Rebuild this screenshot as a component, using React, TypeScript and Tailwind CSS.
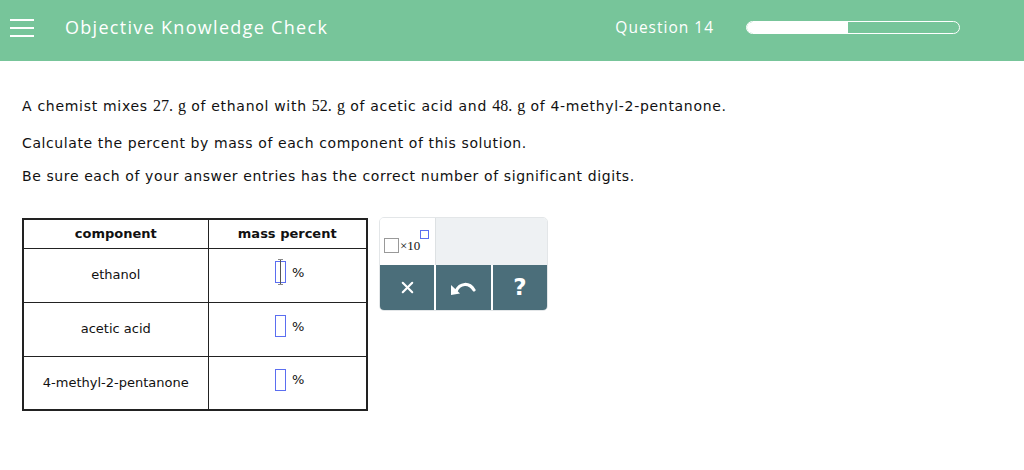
import { X } from 'lucide-react';

const sans = { fontFamily: '"DejaVu Sans", Verdana, sans-serif' };
const serif = 'font-["Liberation_Serif",serif] text-[16px] tracking-normal';

function Num({ v }: { v: string }) {
  return <span className={serif}>{v}</span>;
}

function Box({ cursor }: { cursor?: boolean }) {
  return (
    <span className="relative inline-block w-[11px] h-[22px] border border-[#5b6ef0] align-middle">
      {cursor && (
        <>
          <span className="absolute left-[4px] -top-[3px] w-px h-[26px] bg-[#555]" />
          <span className="absolute left-[2px] -top-[3px] w-[5px] h-px bg-[#888]" />
          <span className="absolute left-[2px] -bottom-[3px] w-[5px] h-px bg-[#888]" />
        </>
      )}
    </span>
  );
}

const rows = ['ethanol', 'acetic acid', '4-methyl-2-pentanone'];

export default function App() {
  return (
    <div className="w-[1024px] h-[470px] bg-white overflow-hidden">
      {/* header */}
      <div className="h-[61px] bg-[#77c59a] flex items-center text-white font-['Open_Sans',sans-serif] pb-[6px]">
        <div className="w-[24px] ml-[10px] flex flex-col gap-[6px]">
          <span className="h-[2px] bg-white" />
          <span className="h-[2px] bg-white" />
          <span className="h-[2px] bg-white" />
        </div>
        <div className="ml-[31px] text-[18px] tracking-[1.3px]">Objective Knowledge Check</div>
        <div className="ml-auto text-[15.5px] tracking-[1px]">Question 14</div>
        <div className="ml-[32px] mr-[64px] w-[214px] h-[13px] rounded-full border border-white flex overflow-hidden">
          <div className="w-[101px] bg-white" />
        </div>
      </div>

      {/* question */}
      <div className="px-[22px] pt-[35px] text-[14px] text-[#111]" style={sans}>
        <p className="leading-[20px] tracking-[0.7px]">
          A chemist mixes <Num v="27." /> <Num v="g" /> of ethanol with <Num v="52." /> <Num v="g" /> of acetic acid and <Num v="48." /> <Num v="g" /> of 4-methyl-2-pentanone.
        </p>
        <p className="mt-[17px] leading-[20px] tracking-[0.6px]">Calculate the percent by mass of each component of this solution.</p>
        <p className="mt-[13px] leading-[20px] tracking-[0.6px]">Be sure each of your answer entries has the correct number of significant digits.</p>

        <div className="mt-[32px] flex items-start gap-[11px]">
          <table className="border-collapse border-2 border-[#222] text-[13px] w-[346px]">
            <thead>
              <tr className="h-[29px]">
                <th className="border border-[#222] w-[185px] font-bold">component</th>
                <th className="border border-[#222] font-bold">mass percent</th>
              </tr>
            </thead>
            <tbody>
              {rows.map((r, i) => (
                <tr key={r} className="h-[54px]">
                  <td className="border border-[#222] text-center">{r}</td>
                  <td className="border border-[#222] text-center">
                    <span className="inline-flex items-center gap-[6px] pl-[5px]">
                      <Box cursor={i === 0} />
                      <span>%</span>
                    </span>
                  </td>
                </tr>
              ))}
            </tbody>
          </table>

          <div className="w-[169px] rounded-[5px] overflow-hidden border border-[#e3e6e8] -mt-[1px]">
            <div className="h-[47px] flex bg-[#eef1f3]">
              <div className="w-[56px] bg-white border-r border-[#dde1e3] flex items-center pl-[4px]">
                <span className="w-[15px] h-[15px] border border-[#999] mt-[8px]" />
                <span className="font-['Liberation_Serif',serif] text-[13px] mt-[8px] ml-[1px]">×10</span>
                <span className="w-[9px] h-[9px] border border-[#5b6ef0] -mt-[14px]" />
              </div>
            </div>
            <div className="h-[45px] flex bg-[#4b6e7a] text-white">
              <div className="flex-1 flex items-center justify-center border-r-2 border-white">
                <X size={19} strokeWidth={2.6} />
              </div>
              <div className="flex-1 flex items-center justify-center border-r-2 border-white">
                <svg width="26" height="16" viewBox="0 0 26 16">
                  <path d="M6 11 C10 3, 19 2, 24 10" fill="none" stroke="white" strokeWidth="3.2" strokeLinecap="round" />
                  <path d="M1 5 L10 13.5 L1 15 Z" fill="white" />
                </svg>
              </div>
              <div className="flex-1 flex items-center justify-center text-[23px] font-bold" style={sans}>?</div>
            </div>
          </div>
        </div>
      </div>
    </div>
  );
}
